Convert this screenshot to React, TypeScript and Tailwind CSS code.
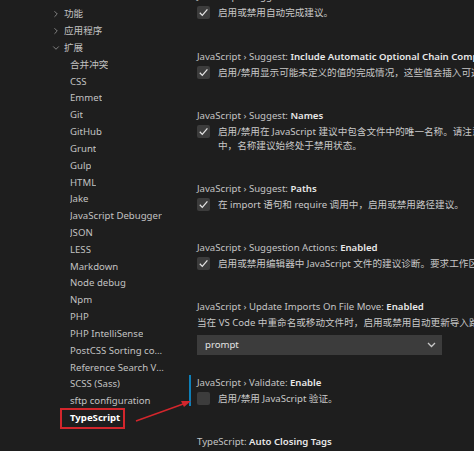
import React from 'react';
import { ChevronRight, ChevronDown } from 'lucide-react';

const font = { fontFamily: '"Noto Sans", "Noto Sans CJK SC", sans-serif' };

const groups = [
  { label: '功能', open: false },
  { label: '应用程序', open: false },
  { label: '扩展', open: true },
];

const extensions = [
  '合并冲突',
  'CSS',
  'Emmet',
  'Git',
  'GitHub',
  'Grunt',
  'Gulp',
  'HTML',
  'Jake',
  'JavaScript Debugger',
  'JSON',
  'LESS',
  'Markdown',
  'Node debug',
  'Npm',
  'PHP',
  'PHP IntelliSense',
  'PostCSS Sorting configuration',
  'Reference Search View',
  'SCSS (Sass)',
  'sftp configuration',
  'TypeScript',
];

const Checkbox: React.FC<{ checked: boolean }> = ({ checked }) => (
  <span className="flex-shrink-0 w-[13px] h-[13px] rounded-[2px] bg-[#3c3c3c] flex items-center justify-center">
    {checked && (
      <svg width="11" height="11" viewBox="0 0 11 11">
        <polyline points="1.8,5.8 4.3,8.4 9.4,2.4" fill="none" stroke="#e2e2e2" strokeWidth="1.3" />
      </svg>
    )}
  </span>
);

interface SettingProps {
  category: string;
  name: string;
  checked?: boolean;
  lines: string[];
  focused?: boolean;
  children?: React.ReactNode;
  className?: string;
}

const Setting: React.FC<SettingProps> = ({ category, name, checked, lines, focused, children, className }) => (
  <div className={`pt-[10px] ${className ?? 'pb-[18px]'}`}>
    <div className={`border-l-2 pl-[6px] ${focused ? 'border-[#0e7fb8]' : 'border-transparent'}`}>
      <div className="h-[16px] leading-[16px] whitespace-nowrap">
        <span className="text-[#c4c4c4]">{category}</span>
        <span className="font-semibold text-[#e8e8e8]">{name}</span>
      </div>
      {checked === undefined ? (
        lines.map((l) => (
          <div key={l} className="h-[15px] leading-[15px] whitespace-nowrap text-[#c8c8c8]">
            {l}
          </div>
        ))
      ) : (
        <div className="flex items-start gap-[8px]">
          <div className="h-[15px] flex items-center">
            <Checkbox checked={checked} />
          </div>
          <div>
            {lines.map((l, i) => (
              <div key={l} className={`${i > 0 ? 'h-[14px] leading-[14px]' : 'h-[15px] leading-[15px]'} whitespace-nowrap text-[#c8c8c8]`}>
                {l}
              </div>
            ))}
          </div>
        </div>
      )}
      {children}
    </div>
  </div>
);

export default function App() {
  return (
    <div className="relative w-[474px] h-[451px] overflow-hidden bg-[#1e1e1e] text-[9.6px] flex" style={font}>
      {/* tree */}
      <div className="w-[180px] flex-shrink-0 pt-[6px] pr-[14px] text-[#c2c2c2]">
        {groups.map((g) => (
          <div key={g.label} className="h-[16.83px] flex items-center pl-[51px]">
            <span className="w-[10px] mr-[3px] flex items-center justify-center text-[#bdbdbd]">
              {g.open ? <ChevronDown size={10} strokeWidth={1.5} /> : <ChevronRight size={10} strokeWidth={1.5} />}
            </span>
            <span>{g.label}</span>
          </div>
        ))}
        {extensions.map((e) => (
          <div key={e} className="relative h-[16.83px] flex items-center pl-[70px]">
            {e === 'TypeScript' ? (
              <>
                <span className="font-bold text-white">{e}</span>
                <span className="absolute left-[60px] top-[-2px] w-[65px] h-[21px] border-2 border-[#d3262c]" />
              </>
            ) : (
              <span className="truncate">{e}</span>
            )}
          </div>
        ))}
      </div>

      {/* settings */}
      <div className="flex-1 min-w-0 overflow-hidden pl-[9px] mt-[-21px]">
        <Setting category="JavaScript › Suggest: " name="Enabled" checked lines={['启用或禁用自动完成建议。']} className="pt-[8px] pb-[19px]" />
        <Setting
          category="JavaScript › Suggest: "
          name="Include Automatic Optional Chain Completions"
          checked
          lines={['启用/禁用显示可能未定义的值的完成情况，这些值会插入可选链调用。需要启用 TS 3.7+ 和 strictNullChecks。']}
        />
        <Setting
          category="JavaScript › Suggest: "
          name="Names"
          checked
          lines={[
            '启用/禁用在 JavaScript 建议中包含文件中的唯一名称。请注意，在使用 @ts-check 或 checkJs 进行语义检查的 JavaScript 文件',
            '中，名称建议始终处于禁用状态。',
          ]}
        />
        <Setting category="JavaScript › Suggest: " name="Paths" checked lines={['在 import 语句和 require 调用中，启用或禁用路径建议。']} />
        <Setting
          category="JavaScript › Suggestion Actions: "
          name="Enabled"
          checked
          lines={['启用或禁用编辑器中 JavaScript 文件的建议诊断。要求工作区中使用 TypeScript 2.8 或更高版本。']}
        />
        <Setting
          category="JavaScript › Update Imports On File Move: "
          name="Enabled"
          lines={['当在 VS Code 中重命名或移动文件时，启用或禁用自动更新导入路径。']}
          className="pb-[10px]"
        >
          <div className="mt-[5px] w-[245px] h-[20px] bg-[#3c3c3c] flex items-center justify-between pl-[8px] pr-[6px] text-[#e4e4e4]">
            <span>prompt</span>
            <svg width="9" height="6" viewBox="0 0 9 6">
              <polyline points="1,1 4.5,4.5 8,1" fill="none" stroke="#c8c8c8" strokeWidth="1.3" />
            </svg>
          </div>
        </Setting>
        <Setting category="JavaScript › Validate: " name="Enable" checked={false} lines={['启用/禁用 JavaScript 验证。']} focused />
        <Setting category="TypeScript: " name="Auto Closing Tags" checked lines={['启用/禁用自动关闭 JSX 标记。']} />
      </div>

      {/* annotation arrow */}
      <svg className="absolute left-0 top-0 pointer-events-none" width="474" height="451">
        <line x1="136" y1="421" x2="186" y2="403" stroke="#d3262c" strokeWidth="1.4" />
        <polygon points="191,401 181,401 184,407" fill="#d3262c" />
      </svg>
    </div>
  );
}
